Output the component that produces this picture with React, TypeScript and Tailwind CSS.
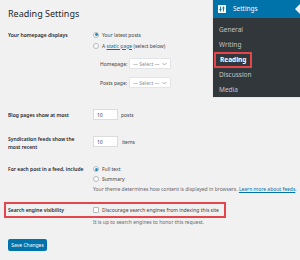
import React from 'react';

const font = { fontFamily: '"Noto Sans", "Open Sans", sans-serif' };

function Radio({ checked }: { checked?: boolean }) {
  return (
    <span className="w-[6px] h-[6px] rounded-full border border-[#b4b9be] bg-white flex items-center justify-center shrink-0">
      {checked && <span className="w-[3px] h-[3px] rounded-full bg-[#1e8cbe]" />}
    </span>
  );
}

function Select() {
  return (
    <div className="w-[42px] h-[11px] bg-white border border-[#e2e4e7] rounded-[1px] flex items-center justify-between pl-[3px] pr-[3px] text-[#8c8f94]">
      <span>— Select —</span>
      <svg width="5" height="4" viewBox="0 0 5 4" fill="none">
        <path d="M0.5 1 L2.5 3 L4.5 1" stroke="#8c8f94" strokeWidth="0.7" />
      </svg>
    </div>
  );
}

const menu = ['General', 'Writing', 'Reading', 'Discussion', 'Media'];

export default function App() {
  return (
    <div
      className="relative w-[300px] h-[260px] bg-[#f1f1f1] overflow-hidden text-[5px] leading-[8px] text-[#444]"
      style={font}
    >
      <div className="pl-[8px] pt-[8px]">
        <h1 className="text-[9px] leading-[12px] text-[#23282d]">Reading Settings</h1>

        {/* homepage displays */}
        <div className="flex mt-[9px]">
          <div className="w-[85px] h-[11px] flex items-center font-semibold text-[#23282d]">
            Your homepage displays
          </div>
          <div className="flex flex-col">
            <div className="h-[11px] flex items-center gap-[3px]">
              <Radio checked />
              <span>Your latest posts</span>
            </div>
            <div className="h-[11px] flex items-center gap-[3px]">
              <Radio />
              <span>
                A <span className="text-[#0073aa] underline">static page</span> (select below)
              </span>
            </div>
            <div className="flex items-center ml-[7px] mt-[7px]">
              <span className="w-[29px]">Homepage:</span>
              <Select />
            </div>
            <div className="flex items-center ml-[7px] mt-[8px]">
              <span className="w-[29px]">Posts page:</span>
              <Select />
            </div>
          </div>
        </div>

        {/* blog pages */}
        <div className="flex mt-[21px] items-center">
          <div className="w-[85px] font-semibold text-[#23282d]">Blog pages show at most</div>
          <div className="w-[25px] h-[11px] bg-white border border-[#dcdcde] flex items-center pl-[3px]">10</div>
          <span className="ml-[3px]">posts</span>
        </div>

        {/* syndication */}
        <div className="flex mt-[15px]">
          <div className="w-[85px] font-semibold text-[#23282d]">
            Syndication feeds show the
            <br />
            most recent
          </div>
          <div className="flex items-center mt-[1px] h-[11px]">
            <div className="w-[25px] h-[11px] bg-white border border-[#dcdcde] flex items-center pl-[3px]">10</div>
            <span className="ml-[4px]">items</span>
          </div>
        </div>

        {/* feed include */}
        <div className="flex mt-[13px]">
          <div className="w-[85px] h-[10px] flex items-center font-semibold text-[#23282d]">
            For each post in a feed, include
          </div>
          <div className="flex flex-col">
            <div className="h-[10px] flex items-center gap-[3px]">
              <Radio checked />
              <span>Full text</span>
            </div>
            <div className="h-[9px] flex items-center gap-[3px]">
              <Radio />
              <span>Summary</span>
            </div>
            <div className="mt-[2px] whitespace-nowrap text-[#646970]">
              Your theme determines how content is displayed in browsers.{' '}
              <span className="text-[#0073aa] underline">Learn more about feeds</span>.
            </div>
          </div>
        </div>

        {/* search engine visibility */}
        <div className="-ml-[4px] mt-[9px] w-[222px] h-[16px] border-2 border-[#e4474b] flex items-center pl-[2px]">
          <div className="w-[85px] font-semibold text-[#23282d]">Search engine visibility</div>
          <span className="w-[6px] h-[6px] border border-[#b4b9be] bg-white rounded-[1px] shrink-0" />
          <span className="ml-[3px] whitespace-nowrap">Discourage search engines from indexing this site</span>
        </div>
        <div className="ml-[85px] text-[#646970]">It is up to search engines to honor this request.</div>

        <button className="mt-[13px] w-[39px] h-[12px] bg-[#0073aa] rounded-[2px] text-white text-[5px] leading-[12px] flex items-center justify-center">
          Save Changes
        </button>
      </div>

      {/* settings menu overlay */}
      <div className="absolute top-0 left-[212px] w-[88px] h-[98px] bg-[#32373c] border-l border-b border-[#e8e8e8]">
        <div className="relative h-[18px] bg-[#0073aa] flex items-center pl-[5px] text-white text-[6.5px]">
          <svg width="8" height="8" viewBox="0 0 8 8">
            <rect x="0" y="0" width="8" height="8" rx="0.5" fill="#fff" />
            <rect x="2" y="1.5" width="0.9" height="5" fill="#0073aa" />
            <rect x="1.3" y="4" width="2.3" height="1" fill="#0073aa" />
            <rect x="5" y="1.5" width="0.9" height="5" fill="#0073aa" />
            <rect x="4.3" y="2.5" width="2.3" height="1" fill="#0073aa" />
          </svg>
          <span className="ml-[7px]">Settings</span>
          <span className="absolute right-0 top-[4px] w-0 h-0 border-y-[5px] border-y-transparent border-r-[5px] border-r-[#f1f1f1]" />
        </div>
        <div className="pt-[4px] text-[6.5px] text-[#c3c4c7]">
          {menu.map((m) =>
            m === 'Reading' ? (
              <div key={m} className="h-[15px] flex items-center">
                <div className="ml-[1px] w-[38px] h-[16px] border-2 border-[#e4474b] pl-[4px] flex items-center font-bold text-white">
                  {m}
                </div>
              </div>
            ) : (
              <div key={m} className="h-[15px] flex items-center pl-[6px]">
                {m}
              </div>
            )
          )}
        </div>
      </div>
    </div>
  );
}
